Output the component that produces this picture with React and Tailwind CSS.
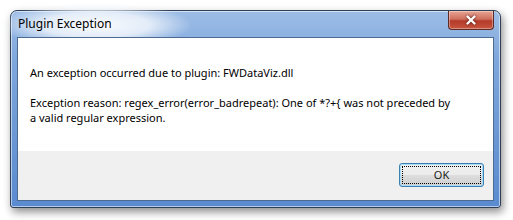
import { X } from "lucide-react";

const uiFont = { fontFamily: '"Noto Sans", "Open Sans", sans-serif' };

function CloseButton() {
  return (
    <div className="mr-[6px] flex h-[19px] w-[46px] items-center justify-center self-start rounded-b-[4px] border border-t-0 border-[#5e2a28] bg-[linear-gradient(#e8a493_0%,#d0705e_45%,#b43a29_55%,#c7553f_100%)] shadow-[inset_0_0_0_1px_rgba(255,255,255,0.35)]">
      <X
        size={14}
        strokeWidth={4}
        className="text-white drop-shadow-[0_0_1px_#3a1410]"
      />
    </div>
  );
}

function OkButton() {
  return (
    <button className="h-[24px] w-[85px] rounded-[3px] border border-[#3c7fb1] bg-[linear-gradient(#f2f2f2_0%,#ebebeb_50%,#dddddd_51%,#cfcfcf_100%)] p-[2px] shadow-[inset_0_0_0_1px_#a7dbf6]">
      <span className="flex h-full w-full items-center justify-center border border-dotted border-black text-[11px] text-[#1a1a1a]">
        OK
      </span>
    </button>
  );
}

export default function App() {
  return (
    <div className="h-[220px] w-[513px] bg-white pl-[10px] pt-[10px]" style={uiFont}>
      <div className="flex h-[198px] w-[491px] flex-col rounded-t-[7px] rounded-b-[3px] border border-[#2f3f55] bg-[linear-gradient(180deg,#9dbde6_0%,#7ea7dc_25%,#6d99d4_60%,#5a8bd0_100%)] shadow-[2px_4px_8px_rgba(0,0,0,0.45),inset_0_0_0_1px_rgba(255,255,255,0.55)]">
        <div className="relative flex h-[26px] items-stretch justify-between">
          <div className="absolute left-[-10px] top-[-8px] h-[44px] w-[190px] rounded-full bg-[radial-gradient(ellipse_at_center,rgba(255,255,255,0.95)_0%,rgba(240,245,252,0.85)_40%,rgba(255,255,255,0)_72%)]" />
          <div className="relative flex items-center pl-[7px] text-[12px] text-black">
            Plugin Exception
          </div>
          <CloseButton />
        </div>
        <div className="relative mx-[6px] flex h-[164px] flex-col border border-[#4d6a92]">
          <div className="h-[113px] bg-white pl-[12px] pt-[27px] text-[11px] leading-[15px] text-black">
            <p>An exception occurred due to plugin: FWDataViz.dll</p>
            <p className="mt-[15px]">
              Exception reason: regex_error(error_badrepeat): One of *?+{"{"} was not preceded by
              <br />
              a valid regular expression.
            </p>
          </div>
          <div className="flex flex-1 items-start justify-end bg-[#f0f0f0] pr-[9px] pt-[12px]">
            <OkButton />
          </div>
        </div>
      </div>
    </div>
  );
}
